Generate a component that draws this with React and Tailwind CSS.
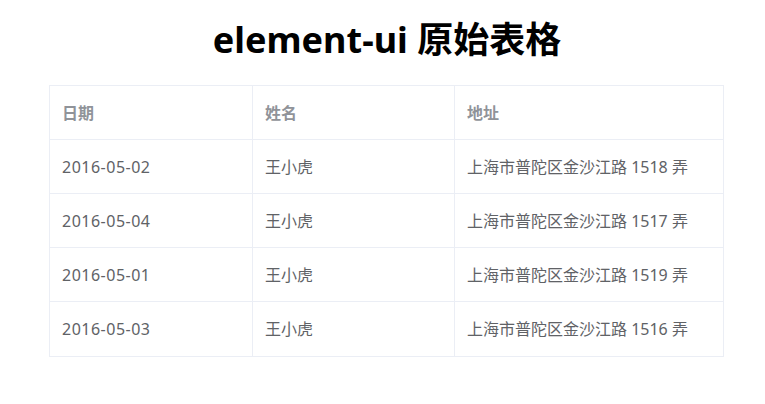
import React from 'react'

const rows = [
  { date: '2016-05-02', name: '王小虎', address: '上海市普陀区金沙江路 1518 弄' },
  { date: '2016-05-04', name: '王小虎', address: '上海市普陀区金沙江路 1517 弄' },
  { date: '2016-05-01', name: '王小虎', address: '上海市普陀区金沙江路 1519 弄' },
  { date: '2016-05-03', name: '王小虎', address: '上海市普陀区金沙江路 1516 弄' },
]

export default function App() {
  return (
    <div
      className="w-[765px] h-[404px] bg-white"
      style={{ fontFamily: '"Noto Sans", "Noto Sans CJK SC", sans-serif' }}
    >
      <h1 className="pt-[15px] pl-[9px] text-center text-[36px] leading-[50px] font-bold text-black">
        element-ui 原始表格
      </h1>

      {/* 表格 */}
      <div className="ml-[49px] mt-[20px] w-[675px] border border-[#ebeef5] text-[16px]">
        <div className="flex h-[54px] border-b border-[#ebeef5] font-bold text-[#909399]">
          <div className="w-[203px] flex items-center pl-[12px] border-r border-[#ebeef5]">日期</div>
          <div className="w-[202px] flex items-center pl-[12px] border-r border-[#ebeef5]">姓名</div>
          <div className="flex-1 flex items-center pl-[12px]">地址</div>
        </div>
        {rows.map((r, i) => (
          <div
            key={i}
            className={'flex h-[54px] text-[#606266] ' + (i < rows.length - 1 ? 'border-b border-[#ebeef5]' : '')}
          >
            <div className="w-[203px] flex items-center pl-[12px] border-r border-[#ebeef5] tracking-[0.5px]">{r.date}</div>
            <div className="w-[202px] flex items-center pl-[12px] border-r border-[#ebeef5]">{r.name}</div>
            <div className="flex-1 flex items-center pl-[12px]">{r.address}</div>
          </div>
        ))}
      </div>
    </div>
  )
}
